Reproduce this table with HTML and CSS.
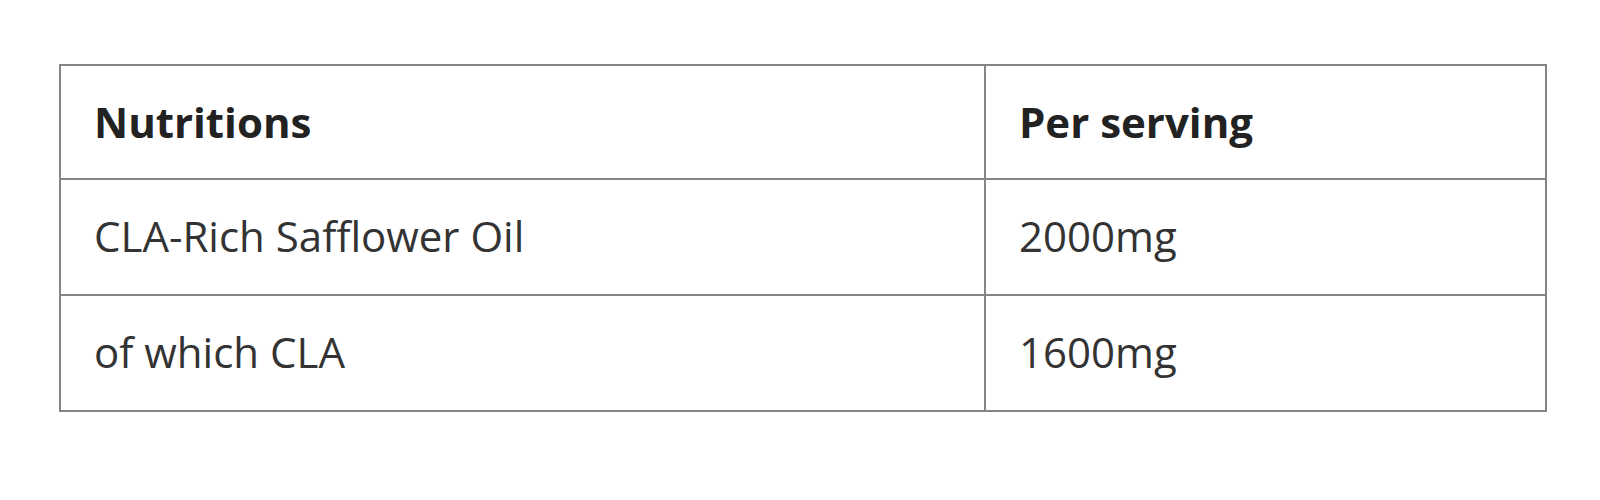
FILE: index.html
```html
<!DOCTYPE html>
<html>
<head>
<meta charset="utf-8">
<link rel="stylesheet" href="styles.css">
</head>
<body>
<div class="wrap">
<table class="nutri">
  <colgroup><col class="c1"><col class="c2"></colgroup>
  <thead>
    <tr><th>Nutritions</th><th>Per serving</th></tr>
  </thead>
  <tbody>
    <tr><td>CLA-Rich Safflower Oil</td><td>2000mg</td></tr>
    <tr><td>of which CLA</td><td>1600mg</td></tr>
  </tbody>
</table>
</div>
</body>
</html>
```
FILE: styles.css
```css
html, body {
  margin: 0;
  padding: 0;
  background: #fff;
}
.wrap {
  padding: 64px 0 0 59px;
}
.nutri {
  border-collapse: collapse;
  table-layout: fixed;
  width: 1488px;
  font-family: "Open Sans", sans-serif;
  font-size: 42px;
  line-height: 63px;
  color: #333;
}
.c1 { width: 925px; }
.nutri th, .nutri td {
  border: 2px solid #858585;
  text-align: left;
  padding: 24px 33px 25px;
  white-space: nowrap;
}
.nutri td {
  padding-bottom: 27px;
}
.nutri th {
  font-weight: 700;
  color: #222;
}
```
